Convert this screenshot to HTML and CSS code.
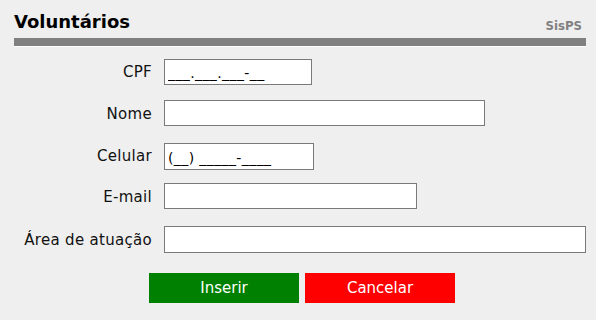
FILE: index.html
```html
<!DOCTYPE html>
<html lang="pt-BR">
<head>
<meta charset="utf-8">
<link rel="stylesheet" href="styles.css">
</head>
<body>
<div class="page">
  <div class="header">
    <h1 class="title">Voluntários</h1>
    <span class="brand">SisPS</span>
  </div>
  <div class="bar"></div>
  <form class="form">
    <label class="lbl" for="cpf">CPF</label>
    <div class="field"><input id="cpf" class="inp w-cpf" value="___.___.___-__"></div>
    <label class="lbl" for="nome">Nome</label>
    <div class="field"><input id="nome" class="inp w-nome"></div>
    <label class="lbl" for="cel">Celular</label>
    <div class="field"><input id="cel" class="inp w-cel" value="(__) _____-____"></div>
    <label class="lbl" for="email">E-mail</label>
    <div class="field"><input id="email" class="inp w-email"></div>
    <label class="lbl" for="area">Área de atuação</label>
    <div class="field"><input id="area" class="inp w-area"></div>
  </form>
  <div class="actions">
    <button class="btn btn-ok" type="button">Inserir</button>
    <button class="btn btn-cancel" type="button">Cancelar</button>
  </div>
</div>
</body>
</html>
```
FILE: styles.css
```css
html, body {
  margin: 0;
  padding: 0;
  background: #efefef;
}
body {
  font-family: "DejaVu Sans", "Liberation Sans", sans-serif;
  color: #111;
  width: 596px;
  height: 320px;
  overflow: hidden;
}
.page {
  padding: 0 10px 0 14px;
}
.header {
  display: flex;
  justify-content: space-between;
  align-items: flex-end;
  height: 38px;
  box-sizing: border-box;
  padding-bottom: 5px;
}
.title {
  margin: 0;
  font-size: 18px;
  font-weight: bold;
  color: #000;
  line-height: 22px;
}
.brand {
  font-family: "Liberation Sans Narrow", "DejaVu Sans Condensed", sans-serif;
  font-weight: bold;
  font-size: 13px;
  color: #808080;
  margin-right: 4px;
  line-height: 14px;
}
.bar {
  height: 8px;
  background: #808080;
  border-bottom: 1px solid #ffffff;
  width: 572px;
}
.form {
  display: grid;
  grid-template-columns: 138px auto;
  grid-template-rows: 26px 28px 25px 28px 27px;
  column-gap: 12px;
  row-gap: 15px;
  margin-top: 12px;
  align-items: center;
}
.lbl {
  text-align: right;
  font-size: 15px;
  letter-spacing: 0.3px;
  color: #111;
}
.field {
  display: flex;
  align-self: start;
}
.inp {
  box-sizing: border-box;
  height: 26px;
  border: 1px solid #7a7a7a;
  background: #fff;
  font-family: "DejaVu Sans", sans-serif;
  font-size: 14px;
  letter-spacing: 0.4px;
  padding: 2px 3px 0;
  color: #000;
  outline: none;
}
.w-cpf { width: 148px; }
.w-nome { width: 321px; }
.w-cel { width: 150px; height: 27px; }
.w-email { width: 253px; }
.w-area { width: 422px; height: 27px; }
.actions {
  display: flex;
  gap: 6px;
  margin-top: 20px;
  padding-left: 135px;
}
.btn {
  width: 150px;
  height: 30px;
  border: none;
  color: #fff;
  font-family: "DejaVu Sans", sans-serif;
  font-size: 15px;
  padding: 0;
}
.btn-ok { background: #008000; }
.btn-cancel { background: #ff0000; }
```
